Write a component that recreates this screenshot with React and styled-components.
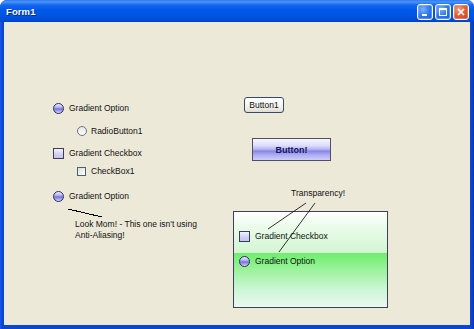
import React from "react";
import styled, { createGlobalStyle } from "styled-components";

const GlobalStyle = createGlobalStyle`
  html, body { margin: 0; padding: 0; background: #ffffff; }
  body { font-family: "Liberation Sans", Arial, sans-serif; }
  * { box-sizing: border-box; }
`;

const Window = styled.div`
  width: 474px;
  height: 329px;
  display: flex;
  flex-direction: column;
  background: #0a46d4;
  border-radius: 7px 7px 0 0;
  overflow: hidden;
`;

const TitleBar = styled.div`
  height: 22px;
  flex: none;
  display: flex;
  align-items: center;
  justify-content: space-between;
  padding: 0 5px 0 6px;
  background: linear-gradient(
    to bottom,
    #2f7bf0 0px,
    #4a94fa 2px,
    #1466ee 5px,
    #0058ea 10px,
    #0054e3 16px,
    #0048d2 21px,
    #003fbf 22px
  );
`;

const Title = styled.span`
  color: #ffffff;
  font-weight: bold;
  font-size: 9.5px;
  letter-spacing: 0.1px;
  text-shadow: 1px 1px 0 #0a2a8a;
`;

const Controls = styled.div`
  display: flex;
  gap: 2px;
  padding-top: 1px;
`;

const CtrlButton = styled.div`
  width: 16px;
  height: 16px;
  border: 1px solid #ffffff;
  border-radius: 3px;
  display: flex;
  align-items: center;
  justify-content: center;
  background: ${(p) =>
    p.$close
      ? "radial-gradient(circle at 35% 30%, #f4a080 0%, #e0603a 45%, #c8401e 100%)"
      : "radial-gradient(circle at 35% 30%, #7fb2ff 0%, #2f78f0 50%, #1a5ae0 100%)"};
  box-shadow: inset 0 0 0 1px rgba(255, 255, 255, 0.25);
`;

const Frame = styled.div`
  flex: 1;
  display: flex;
  padding: 0 4px 4px 4px;
  background: linear-gradient(to right, #1b5ce6 0, #0a46d4 2px, #0a46d4 calc(100% - 2px), #0831a8 100%);
`;

const Client = styled.div`
  position: relative;
  flex: 1;
  display: flex;
  background: #ece9d8;
  font-size: 8.5px;
  color: #111111;
`;

const LeftColumn = styled.div`
  width: 180px;
  margin-left: 49px;
  padding-top: 80px;
  display: flex;
  flex-direction: column;
`;

const RightColumn = styled.div`
  width: 155px;
  padding-top: 75px;
  display: flex;
  flex-direction: column;
`;

const Row = styled.div`
  display: flex;
  align-items: center;
  height: 12px;
  margin-top: ${(p) => p.$top || 0}px;
  padding-left: ${(p) => p.$indent || 0}px;
  gap: ${(p) => p.$gap ?? 5}px;
  white-space: nowrap;
`;

const GradientRadio = styled.span`
  width: 11px;
  height: 11px;
  flex: none;
  border-radius: 50%;
  border: 1px solid #2c2c60;
  background: linear-gradient(to bottom, #ececff 0%, #b8b8f2 35%, #7474dc 55%, #a8a8ee 80%, #d8d8fa 100%);
`;

const PlainRadio = styled.span`
  width: 10px;
  height: 10px;
  flex: none;
  border-radius: 50%;
  border: 1px solid #6a7686;
  background: linear-gradient(to bottom, #e4e4e0, #ffffff);
`;

const GradientCheck = styled.span`
  width: 11px;
  height: 11px;
  flex: none;
  border: 1px solid #3c3c5c;
  background: linear-gradient(to bottom, #f2f2ff 0%, #cfcff4 60%, #c4c4ee 100%);
`;

const PlainCheck = styled.span`
  width: 9px;
  height: 9px;
  flex: none;
  border: 1px solid #4a6272;
  background: linear-gradient(135deg, #dcdcd6, #ffffff);
`;

const Note = styled.div`
  margin-top: 17px;
  padding-left: 22px;
  line-height: 11px;
  white-space: nowrap;
`;

const XPButton = styled.div`
  width: 40px;
  height: 16px;
  margin-left: 11px;
  border: 1px solid #3a4a64;
  border-radius: 3px;
  display: flex;
  align-items: center;
  justify-content: center;
  background: linear-gradient(to bottom, #ffffff 0%, #f4f3ee 60%, #dedcd2 100%);
`;

const FancyButton = styled.div`
  width: 79px;
  height: 23px;
  margin-top: 25px;
  margin-left: 19px;
  border: 1px solid #505064;
  display: flex;
  align-items: center;
  justify-content: center;
  font-weight: bold;
  font-size: 9px;
  color: #14145a;
  background: linear-gradient(
    to bottom,
    #f6f6ff 0%,
    #dedefc 30%,
    #b8b8f6 48%,
    #8686e6 58%,
    #a6a6f0 72%,
    #cfcffa 100%
  );
`;

const Caption = styled.div`
  margin-top: 27px;
  margin-left: 58px;
  height: 11px;
  line-height: 11px;
`;

const Panel = styled.div`
  margin-top: 12px;
  width: 155px;
  height: 97px;
  border: 1px solid #40405e;
  display: flex;
  flex-direction: column;
  padding: 18px 0 0 5px;
  background: linear-gradient(
    to bottom,
    #ffffff 0px,
    #eafbea 15px,
    #d2f6d2 41px,
    #6cee6c 41px,
    #9cf29c 58px,
    #cdf6d6 78px,
    #eaf8f0 95px
  );
`;

const Lines = styled.svg`
  position: absolute;
  left: 0;
  top: 0;
  pointer-events: none;
`;

export default function App() {
  return (
    <>
      <GlobalStyle />
      <Window>
        <TitleBar>
          <Title>Form1</Title>
          <Controls>
            <CtrlButton>
              <svg width="10" height="10" viewBox="0 0 10 10">
                <rect x="2" y="7" width="5" height="2" fill="#fff" />
              </svg>
            </CtrlButton>
            <CtrlButton>
              <svg width="10" height="10" viewBox="0 0 10 10">
                <rect x="1.5" y="1.5" width="7" height="7" fill="none" stroke="#fff" strokeWidth="1" />
                <rect x="1.5" y="1" width="7" height="2" fill="#fff" />
              </svg>
            </CtrlButton>
            <CtrlButton $close>
              <svg width="10" height="10" viewBox="0 0 10 10">
                <path d="M2 2 L8 8 M8 2 L2 8" stroke="#fff" strokeWidth="1.6" />
              </svg>
            </CtrlButton>
          </Controls>
        </TitleBar>
        <Frame>
          <Client>
            <LeftColumn>
              <Row>
                <GradientRadio />
                <span>Gradient Option</span>
              </Row>
              <Row $top={11} $indent={24} $gap={4}>
                <PlainRadio />
                <span>RadioButton1</span>
              </Row>
              <Row $top={10}>
                <GradientCheck />
                <span>Gradient Checkbox</span>
              </Row>
              <Row $top={6} $indent={24} $gap={5}>
                <PlainCheck />
                <span>CheckBox1</span>
              </Row>
              <Row $top={13}>
                <GradientRadio />
                <span>Gradient Option</span>
              </Row>
              <Note>
                Look Mom! - This one isn't using
                <br />
                Anti-Aliasing!
              </Note>
            </LeftColumn>
            <RightColumn>
              <XPButton>Button1</XPButton>
              <FancyButton>Button!</FancyButton>
              <Caption>Transparency!</Caption>
              <Panel>
                <Row>
                  <GradientCheck />
                  <span>Gradient Checkbox</span>
                </Row>
                <Row $top={13}>
                  <GradientRadio />
                  <span>Gradient Option</span>
                </Row>
              </Panel>
            </RightColumn>
            <Lines width="466" height="303">
              <line x1="64" y1="187" x2="98" y2="195" stroke="#000" strokeWidth="1" shapeRendering="crispEdges" />
              <line x1="302" y1="181" x2="264" y2="207" stroke="#000" strokeWidth="0.8" />
              <line x1="311" y1="181" x2="275" y2="230" stroke="#000" strokeWidth="0.8" />
            </Lines>
          </Client>
        </Frame>
      </Window>
    </>
  );
}
